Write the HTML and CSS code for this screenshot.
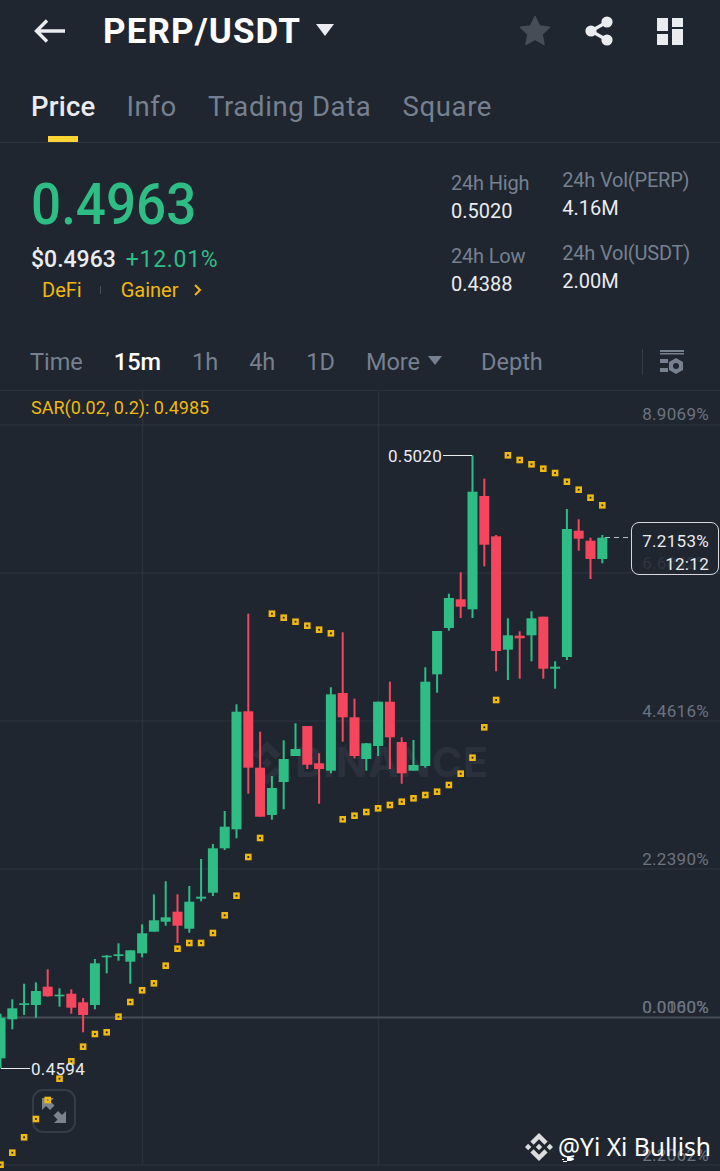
FILE: index.html
```html
<!DOCTYPE html>
<html lang="en">
<head>
    <meta charset="UTF-8">
    <meta name="viewport" content="width=device-width, initial-scale=1.0">
    <title>PERP/USDT</title>
    <link rel="stylesheet" href="styles.css">
</head>
<body>
    <svg class="defs" width="0" height="0">
        <symbol id="bnb" viewBox="0 0 126.61 126.61">
            <path d="M38.73 53.2l24.59-24.58 24.6 24.6 14.3-14.31L63.32 0 24.43 38.9zM0 63.31l14.3-14.31 14.31 14.31-14.31 14.3zM38.73 73.41l24.59 24.59 24.6-24.6 14.31 14.29-38.9 38.91-38.91-38.88zM98 63.31l14.3-14.31 14.31 14.3-14.31 14.32zM77.83 63.3L63.32 48.78 52.59 59.51l-1.24 1.23-2.54 2.54 14.51 14.5 14.51-14.47z"/>
        </symbol>
    </svg>

    <div class="topbar">
        <svg class="back" width="32" height="26" viewBox="0 0 32 26">
            <path d="M31 13H3M13 2.5L2.5 13L13 23.5" fill="none" stroke="#eaecef" stroke-width="3.4"/>
        </svg>
        <div class="title">PERP/USDT</div>
        <div class="title-caret"></div>
        <div class="top-icons">
            <svg width="32" height="32" viewBox="0 0 32 32">
                <path d="M16 1.5l4.4 9.4 10.1 1.3-7.4 7.1 1.9 10.1-9-5-9 5 1.9-10.1-7.4-7.1 10.1-1.3z" fill="#474d57" stroke="#474d57" stroke-width="1.5" stroke-linejoin="round"/>
            </svg>
            <svg width="30" height="32" viewBox="0 0 30 32">
                <path d="M23 7L7 16L23 25" fill="none" stroke="#eaecef" stroke-width="3.2"/>
                <circle cx="23" cy="7" r="5.6" fill="#eaecef"/>
                <circle cx="7" cy="16" r="5.6" fill="#eaecef"/>
                <circle cx="23" cy="25" r="5.6" fill="#eaecef"/>
            </svg>
            <svg class="layout-icon" width="28" height="28" viewBox="0 0 28 28">
                <path d="M1 1h11v13H1zM1 17h11v11H1zM16 1h11v9H16zM16 12h11v16H16z" fill="#eaecef"/>
            </svg>
        </div>
    </div>

    <div class="tabs">
        <div class="tab tab-active">Price</div>
        <div class="tab">Info</div>
        <div class="tab">Trading Data</div>
        <div class="tab">Square</div>
    </div>

    <div class="quote">
        <div class="quote-left">
            <div class="last-price">0.4963</div>
            <div class="sub-price">
                <span class="usd">$0.4963</span>
                <span class="change">+12.01%</span>
            </div>
            <div class="quote-tags">
                <span>DeFi</span>
                <span class="tag-sep"></span>
                <span>Gainer</span>
                <svg width="10" height="14" viewBox="0 0 10 14">
                    <path d="M2 2l5 5-5 5" fill="none" stroke="#f0b90b" stroke-width="2"/>
                </svg>
            </div>
        </div>
        <div class="stats">
            <div class="stat-col">
                <div class="stat-label">24h High</div>
                <div class="stat-value">0.5020</div>
                <div class="stat-label stat-next">24h Low</div>
                <div class="stat-value">0.4388</div>
            </div>
            <div class="stat-col stat-col-vol">
                <div class="stat-label">24h Vol(PERP)</div>
                <div class="stat-value">4.16M</div>
                <div class="stat-label stat-next">24h Vol(USDT)</div>
                <div class="stat-value">2.00M</div>
            </div>
        </div>
    </div>

    <div class="intervals">
        <span>Time</span>
        <span class="interval-active">15m</span>
        <span>1h</span>
        <span>4h</span>
        <span>1D</span>
        <span class="more">More<i class="more-caret"></i></span>
        <span class="depth">Depth</span>
        <div class="interval-tools">
            <svg width="26" height="26" viewBox="0 0 26 26">
                <path d="M1 1h24v2H1zM1 4h24v1.500H1zM1 10h8v4H1zM1 19h8v4H1z" fill="#76808f"/>
                <path d="M17 9l7 4v8l-7 4-7-4v-8z" fill="#76808f"/>
                <circle cx="17" cy="17" r="3" fill="#1f2630"/>
            </svg>
        </div>
    </div>

    <div class="chart">
        <svg id="plot" class="plot" width="720" height="780" viewBox="0 391 720 780">
            <g class="grid">
                <path d="M142.500 391V1165M378.500 391V1165M0 425H720M0 573H720M0 721H720M0 869H720M0 1165H720"/>
            </g>
            <path class="zero-line" d="M0 1017.500H720"/>
            <g class="brand">
                <use href="#bnb" x="245" y="741" width="44" height="44"/>
                <text x="295" y="777">BINANCE</text>
            </g>
            <rect class="expand-box" x="33" y="1090" width="42" height="42" rx="10"/>
            <path class="expand-icon" d="M42 1098h12l-3.500 3.500 4 4-4.500 4.500-4-4-4 4zM66 1123H54l3.500-3.500-4-4 4.500-4.500 4 4 4-4z"/>
            <path class="pointer" d="M443 455.500H472M1 1068.500H30"/>
            <path class="last-dash" d="M605 537.500H629"/>
        </svg>

        <span class="axis axis-1">8.9069%</span>
        <span class="axis axis-2">6.6842%</span>
        <span class="axis axis-3">4.4616%</span>
        <span class="axis axis-4">2.2390%</span>
        <span class="axis axis-5">0.0000%</span>
        <span class="axis axis-5">0.0160%</span>
        <span class="axis axis-6">2.2062%</span>

        <div class="sar">SAR(0.02, 0.2): 0.4985</div>
        <span class="peak peak-high">0.5020</span>
        <span class="peak peak-low">0.4594</span>

        <div class="price-tag">
            <span>7.2153%</span>
            <span>12:12</span>
        </div>

        <div class="credit">
            <svg width="28" height="28"><use href="#bnb" width="28" height="28"/></svg>
            <span>@Yi Xi Bullish</span>
        </div>
        <svg class="credit-mark" width="12" height="6" viewBox="0 0 12 6">
            <path d="M0 3h2v1H0zM1 5h4v1H1zM5 0h4v1.500l3 1v1l-3 1.500H5z" fill="#fff"/>
        </svg>
    </div>

    <script src="chart.js"></script>
</body>
</html>
```

FILE: styles.css
```css
* {
    box-sizing: border-box;
}

body {
    margin: 0;
    width: 720px;
    height: 1171px;
    overflow: hidden;
    background-color: #1f2630;
    color: #eaecef;
    font-family: Roboto, sans-serif;
}

.defs {
    position: absolute;
}

.topbar {
    height: 62px;
    display: flex;
    align-items: center;
    padding-left: 34px;
}

.back {
    margin-right: 37px;
}

.title {
    font-size: 35px;
    font-weight: 700;
    color: #fff;
    letter-spacing: 1.1px;
}

.title-caret {
    width: 0;
    height: 0;
    margin-left: 15px;
    margin-bottom: 3px;
    border-left: 9px solid transparent;
    border-right: 9px solid transparent;
    border-top: 12px solid #eaecef;
}

.top-icons {
    margin-left: auto;
    margin-right: 36px;
    display: flex;
    align-items: center;
    gap: 33px;
}

.layout-icon {
    margin-left: 9px;
}

.tabs {
    height: 81px;
    display: flex;
    gap: 31px;
    padding: 27px 0 0 31px;
    border-bottom: 1px solid #2f3641;
}

.tab {
    position: relative;
    height: 53px;
    font-size: 27.5px;
    line-height: 36px;
    letter-spacing: 0.65px;
    color: #76808f;
}

.tab-active {
    font-weight: 500;
    letter-spacing: 0.2px;
    color: #eaecef;
}

.tab-active::after {
    content: "";
    position: absolute;
    left: 17px;
    bottom: 0;
    width: 30px;
    height: 6px;
    background-color: #fcd535;
}

.quote {
    height: 197px;
    display: flex;
    justify-content: space-between;
    padding-left: 31px;
}

.quote-left {
    display: flex;
    flex-direction: column;
}

/* the app uses a narrow DIN style face, no installed font has that width */
.last-price {
    margin-top: 28px;
    height: 68px;
    font-size: 57px;
    line-height: 68px;
    font-weight: 500;
    color: #2ebd85;
    transform: scaleX(0.93);
    transform-origin: left center;
}

.sub-price {
    margin-top: 6px;
    height: 30px;
    font-size: 23px;
    line-height: 30px;
    display: flex;
    gap: 10px;
}

.usd {
    font-weight: 500;
    color: #eaecef;
}

.change {
    letter-spacing: 0.7px;
    color: #2ebd85;
}

.quote-tags {
    margin-left: 11px;
    height: 30px;
    display: flex;
    align-items: center;
    font-size: 20px;
    color: #f0b90b;
}

.quote-tags svg {
    margin-left: 15px;
}

.tag-sep {
    width: 1px;
    height: 8px;
    margin: 0 20px 0 18px;
    background-color: #474d57;
}

.stats {
    display: flex;
    gap: 33px;
    width: 269px;
}

.stat-col {
    padding-top: 27px;
}

.stat-col-vol {
    padding-top: 24px;
}

.stat-label {
    height: 26px;
    font-size: 20px;
    line-height: 26px;
    letter-spacing: -0.2px;
    color: #76808f;
    white-space: nowrap;
}

.stat-value {
    height: 30px;
    font-size: 20px;
    line-height: 30px;
    color: #eaecef;
}

.stat-next {
    margin-top: 17px;
}

.intervals {
    height: 51px;
    display: flex;
    align-items: center;
    gap: 31px;
    padding: 0 0 6px 30px;
    border-bottom: 1px solid #2a313b;
    font-size: 23.5px;
    color: #76808f;
}

.interval-active {
    font-weight: 500;
    color: #fff;
}

.more {
    display: flex;
    align-items: center;
}

.more-caret {
    width: 0;
    height: 0;
    margin-left: 8px;
    margin-bottom: 3px;
    border-left: 7px solid transparent;
    border-right: 7px solid transparent;
    border-top: 9px solid #76808f;
}

.depth {
    margin-left: 8px;
}

.interval-tools {
    margin-left: auto;
    margin-right: 35px;
    padding-left: 16px;
    height: 26px;
    border-left: 1px solid #363d49;
}

.chart {
    position: relative;
    height: 780px;
}

.plot {
    position: absolute;
    top: 0;
    left: 0;
}

.grid path {
    fill: none;
    stroke: #2a313b;
    stroke-width: 1.5;
}

.zero-line {
    fill: none;
    stroke: #474d57;
    stroke-width: 2;
}

.brand {
    fill: #2a313c;
}

.brand text {
    font-family: Inter, sans-serif;
    font-size: 41px;
    font-weight: 700;
    letter-spacing: 1px;
}

.expand-box {
    fill: none;
    stroke: #363c47;
    stroke-width: 2;
}

.expand-icon {
    fill: #7c838f;
}

.pointer {
    fill: none;
    stroke: #eaecef;
    stroke-width: 1;
}

.last-dash {
    fill: none;
    stroke: #b7bdc6;
    stroke-width: 1;
    stroke-dasharray: 5 4;
}

.axis {
    position: absolute;
    right: 11px;
    font-size: 17px;
    line-height: 20px;
    letter-spacing: 0.3px;
    color: #6b7380;
}

.axis-1 { top: 13px; }
.axis-2 { top: 162px; color: #474d57; }
.axis-3 { top: 310px; }
.axis-4 { top: 458px; }
.axis-5 { top: 606px; }
.axis-6 { top: 754px; }

.sar {
    position: absolute;
    left: 31px;
    top: 7px;
    font-size: 18px;
    line-height: 20px;
    color: #f0b90b;
}

.peak {
    position: absolute;
    font-size: 17px;
    line-height: 20px;
    letter-spacing: 0.3px;
    color: #eaecef;
}

.peak-high {
    left: 388px;
    top: 55px;
}

.peak-low {
    left: 31px;
    top: 668px;
}

.price-tag {
    position: absolute;
    left: 631px;
    top: 131px;
    width: 88px;
    height: 53px;
    padding: 7px 9px 0 0;
    display: flex;
    flex-direction: column;
    align-items: flex-end;
    border: 1px solid #d5d8dd;
    border-radius: 8px;
    background-color: rgba(31, 38, 48, 0.6);
    font-size: 17px;
    line-height: 23px;
    letter-spacing: 0.3px;
    color: #eaecef;
}

.credit {
    position: absolute;
    right: 9px;
    top: 739px;
    display: flex;
    align-items: center;
    gap: 5px;
    font-family: "Noto Sans", sans-serif;
    font-size: 24.6px;
    line-height: 34px;
    color: #fff;
}

.credit svg {
    fill: #dcdcdc;
}

.credit-mark {
    position: absolute;
    left: 562px;
    top: 765px;
}
```

FILE: chart.js
```js
// wickTop, wickBottom, bodyTop, bodyBottom, colour, SAR dot
var candles = [
    [1013.7, 1068.3, 1017.7, 1058.3, "g", 1164.7],
    [999.3, 1029.3, 1008.3, 1019.3, "g", 1152.7],
    [983.7, 1015, 1003.3, 1005, "g", 1137.3],
    [982.3, 1017.7, 991, 1005, "g", 1119],
    [969.3, 996.7, 986.7, 996.3, "r", 1100],
    [988.3, 1006.7, 994.7, 996.3, "g", 1078.7],
    [989.3, 1013.7, 993.7, 1007.7, "r", 1061.3],
    [998, 1032.3, 1002.3, 1015, "r", 1046.7],
    [959, 1009.3, 963.3, 1005, "g", 1034],
    [955, 973.3, 955.7, 957.3, "g", 1032.3],
    [943.3, 960.7, 954.3, 956, "g", 1016.7],
    [950.3, 983.7, 950.3, 961.7, "g", 1002],
    [924.3, 957.3, 933.3, 953.3, "g", 990.3],
    [894.3, 931.7, 920.3, 931.7, "g", 983.3],
    [881.3, 925.7, 917.3, 921.7, "g", 965.7],
    [894.3, 943, 911.7, 925.7, "r", 948.7],
    [886, 932.7, 901.7, 928.7, "g", 943],
    [859, 901.3, 896.7, 898.7, "g", 943],
    [844, 896, 848.3, 892.7, "g", 933],
    [811, 850, 826.7, 848.3, "g", 915.3],
    [704.3, 838.3, 711.7, 829.3, "g", 895.7],
    [613.7, 793.7, 711.3, 767.7, "r", 857],
    [731.7, 816.7, 767.7, 816.7, "r", 838],
    [776, 819.7, 788, 815, "g", 613.7],
    [740.3, 809.3, 759, 782, "g", 617.7],
    [723.3, 756, 749, 756, "g", 621.7],
    [726, 769, 726, 764.7, "r", 625.7],
    [753.3, 803.7, 763.3, 769, "r", 629.7],
    [687.3, 773.3, 694.3, 770.7, "g", 633.3],
    [632.3, 741.7, 693, 717.3, "r", 819.3],
    [698.7, 758.3, 717.3, 756, "r", 815.7],
    [743, 770.7, 743.3, 759, "g", 812],
    [701.7, 756, 701.7, 746, "g", 808.3],
    [681.7, 769, 701.7, 737.3, "r", 805],
    [737.3, 783.7, 742, 773.3, "r", 801.7],
    [740, 770.7, 765, 770.7, "g", 798.3],
    [667.3, 767.7, 681.7, 766, "g", 795],
    [631, 692.7, 631, 674.3, "g", 791.7],
    [593.7, 630.7, 598, 628, "g", 785],
    [572.3, 618, 599.3, 606.7, "r", 773.7],
    [455.3, 618, 491.7, 609.3, "g", 757.7],
    [478.7, 566.3, 496, 544.7, "r", 727.3],
    [535, 671.3, 536.3, 651, "r", 700],
    [618.3, 680, 635.3, 649.7, "g", 455.3],
    [631.3, 678.7, 635.7, 638.3, "r", 460],
    [611.3, 661.3, 618.3, 635.3, "g", 464.3],
    [616.7, 678.7, 616.7, 668.7, "r", 468.7],
    [661.3, 688.7, 666.7, 668.7, "g", 473],
    [509, 660, 529, 657, "g", 481.7],
    [519.3, 550.7, 530.7, 538.7, "r", 489.7],
    [537.7, 579, 540.7, 559, "r", 497.7],
    [535, 563.3, 537.7, 559, "g", 505.3]
];

var plot = document.getElementById("plot");
var colours = { g: "#2ebd85", r: "#f6465d" };

function addRect(x, y, w, h, fill) {
    var r = document.createElementNS("http://www.w3.org/2000/svg", "rect");
    r.setAttribute("x", x);
    r.setAttribute("y", y);
    r.setAttribute("width", w);
    r.setAttribute("height", h);
    r.setAttribute("fill", fill);
    plot.appendChild(r);
    return r;
}

var pointer = plot.querySelector(".pointer");

candles.forEach(function (c, i) {
    var x = 0.5 + i * 11.8;
    addRect(x - 1, c[0], 2, c[1] - c[0], colours[c[4]]);
    addRect(x - 5, c[2], 10, c[3] - c[2], colours[c[4]]);
});

// dots go on top of the candles
candles.forEach(function (c, i) {
    var x = 0.5 + i * 11.8;
    var dot = addRect(x - 2.1, c[5] - 2.1, 4.2, 4.2, "none");
    dot.setAttribute("stroke", "#f0b90b");
    dot.setAttribute("stroke-width", "2.4");
});

plot.appendChild(pointer);
```
